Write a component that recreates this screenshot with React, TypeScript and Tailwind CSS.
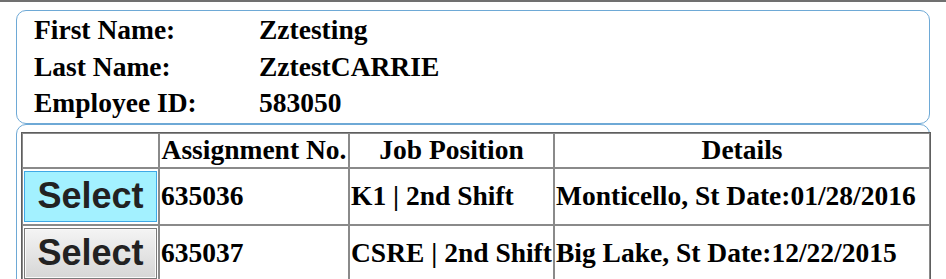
export default function App() {
  const rows = [
    { no: '635036', pos: 'K1 | 2nd Shift', details: 'Monticello, St Date:01/28/2016', active: true },
    { no: '635037', pos: 'CSRE | 2nd Shift', details: 'Big Lake, St Date:12/22/2015', active: false },
  ]

  return (
    <div className="h-[279px] overflow-hidden bg-white font-['Liberation_Serif',serif] font-bold text-black">
      {/* полоса сверху */}
      <div className="h-[2px] bg-[#707070]" />

      <div className="px-4 pt-2">
        {/* Данные сотрудника */}
        <div className="rounded-[10px] border border-[#6ea9d6] pl-[17px] pt-px pb-px text-[27.5px] leading-[36.5px]">
          <div className="flex">
            <span className="w-[225px]">First Name:</span>
            <span>Zztesting</span>
          </div>
          <div className="flex">
            <span className="w-[225px]">Last Name:</span>
            <span>ZztestCARRIE</span>
          </div>
          <div className="flex">
            <span className="w-[225px]">Employee ID:</span>
            <span>583050</span>
          </div>
        </div>

        {/* Назначения */}
        <div className="h-[200px] rounded-[10px] border border-[#6ea9d6] px-1 pt-[7px]">
          <table className="w-[910px] border-separate border-spacing-0 border border-[#5e5e5e] text-[27.5px]">
            <thead>
              <tr className="h-[35px] leading-[30px]">
                <th className="w-[137px] border border-[#8a8a8a]"></th>
                <th className="w-[190px] border border-[#8a8a8a] text-center">Assignment No.</th>
                <th className="w-[205px] border border-[#8a8a8a] text-center">Job Position</th>
                <th className="border border-[#8a8a8a] text-center">Details</th>
              </tr>
            </thead>
            <tbody>
              {rows.map((r) => (
                <tr key={r.no} className="h-[57px]">
                  <td className="border border-[#8a8a8a] p-px">
                    <button
                      className={
                        r.active
                          ? "h-[51px] w-full border border-[#3fa9e6] bg-[#a3f1ff] font-['Liberation_Sans',Arial,sans-serif] text-[36px] font-bold leading-none text-[#222]"
                          : "h-[51px] w-full border border-[#7a7a7a] bg-gradient-to-b from-[#f4f4f4] to-[#d6d6d6] font-['Liberation_Sans',Arial,sans-serif] text-[36px] font-bold leading-none text-[#222] shadow-[inset_0_0_0_1px_#fafafa]"
                      }
                    >
                      Select
                    </button>
                  </td>
                  <td className="border border-[#8a8a8a] px-px">{r.no}</td>
                  <td className="whitespace-nowrap border border-[#8a8a8a] px-px">{r.pos}</td>
                  <td className="whitespace-nowrap border border-[#8a8a8a] px-px">{r.details}</td>
                </tr>
              ))}
            </tbody>
          </table>
        </div>
      </div>
    </div>
  )
}
